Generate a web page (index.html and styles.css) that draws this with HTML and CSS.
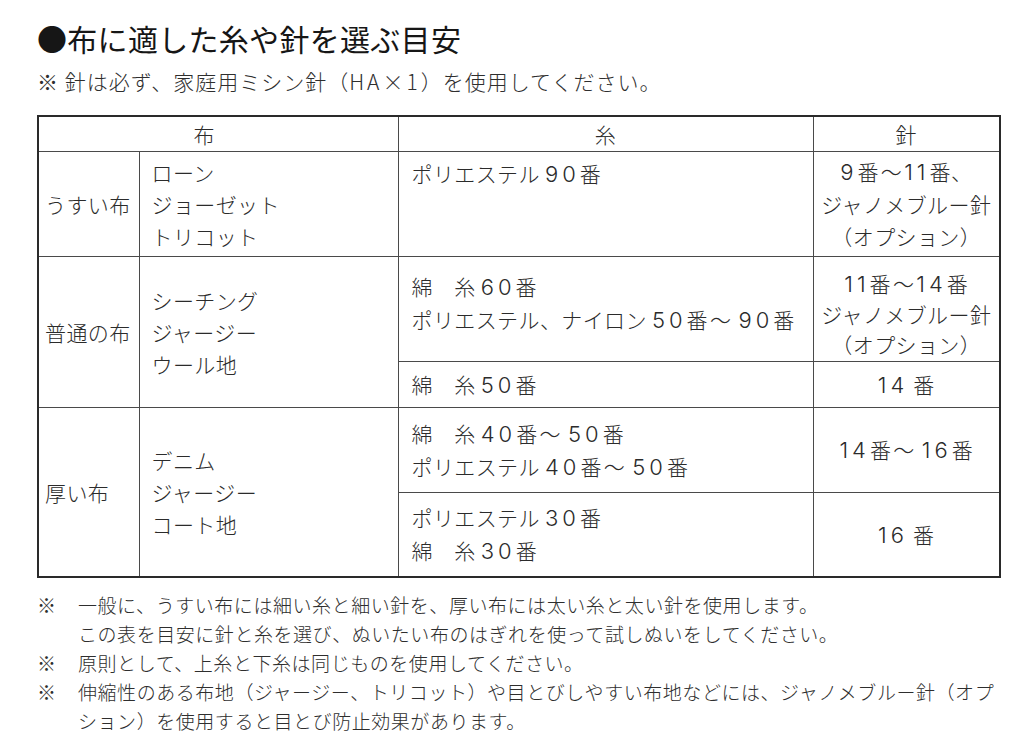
FILE: index.html
```html
<!DOCTYPE html>
<html lang="ja">
<head>
<meta charset="utf-8">
<title>布に適した糸や針を選ぶ目安</title>
<link rel="stylesheet" href="styles.css">
</head>
<body>
<main class="page">
  <h1 class="title">●布に適した糸や針を選ぶ目安</h1>
  <p class="lead">※ 針は必ず、家庭用ミシン針（<span class="latin">HA×1</span>）を使用してください。</p>

  <table class="chart">
    <colgroup>
      <col class="c-kind">
      <col class="c-fabric">
      <col class="c-thread">
      <col class="c-needle">
    </colgroup>
    <thead>
      <tr class="r-head">
        <th class="h-fabric" colspan="2">布</th>
        <th>糸</th>
        <th>針</th>
      </tr>
    </thead>
    <tbody>
      <tr class="r-thin">
        <td class="kind">うすい布</td>
        <td class="fabric">ローン<br>ジョーゼット<br>トリコット</td>
        <td class="thread top">ポリエステル <span class="num">90</span>番</td>
        <td class="needle"><span class="num">9</span>番<span class="wave">～</span><span class="num">11</span>番、<br>ジャノメブルー針<br>（オプション）</td>
      </tr>
      <tr class="r-mid-a">
        <td class="kind" rowspan="2">普通の布</td>
        <td class="fabric" rowspan="2">シーチング<br>ジャージー<br>ウール地</td>
        <td class="thread top-mid">綿　糸 <span class="num">60</span>番<br>ポリエステル、ナイロン <span class="num">50</span>番<span class="wave">～</span> <span class="num">90</span>番</td>
        <td class="needle top-tight">
          <span class="num">11</span>番<span class="wave">～</span><span class="num">14</span>番<br>ジャノメブルー針<br>（オプション）</td>
      </tr>
      <tr class="r-mid-b">
        <td class="thread">綿　糸 <span class="num">50</span>番</td>
        <td class="needle"><span class="num">14</span> 番</td>
      </tr>
      <tr class="r-thick-a">
        <td class="kind" rowspan="2">厚い布</td>
        <td class="fabric" rowspan="2">デニム<br>ジャージー<br>コート地</td>
        <td class="thread">綿　糸 <span class="num">40</span>番<span class="wave">～</span> <span class="num">50</span>番<br>ポリエステル <span class="num">40</span>番<span class="wave">～</span> <span class="num">50</span>番</td>
        <td class="needle"><span class="num">14</span>番<span class="wave">～</span> <span class="num">16</span>番</td>
      </tr>
      <tr class="r-thick-b">
        <td class="thread">ポリエステル <span class="num">30</span>番<br>綿　糸 <span class="num">30</span>番</td>
        <td class="needle"><span class="num">16</span> 番</td>
      </tr>
    </tbody>
  </table>

  <ul class="notes">
    <li><span class="mark">※</span><span class="text">一般に、うすい布には細い糸と細い針を、厚い布には太い糸と太い針を使用します。<br>この表を目安に針と糸を選び、ぬいたい布のはぎれを使って試しぬいをしてください。</span></li>
    <li><span class="mark">※</span><span class="text">原則として、上糸と下糸は同じものを使用してください。</span></li>
    <li><span class="mark">※</span><span class="text">伸縮性のある布地（ジャージー、トリコット）や目とびしやすい布地などには、ジャノメブルー針（オプ<br>ション）を使用すると目とび防止効果があります。</span></li>
  </ul>
</main>
</body>
</html>
```

FILE: styles.css
```css
html, body {
  margin: 0;
  padding: 0;
  background: #ffffff;
}

body {
  font-family: "Noto Sans CJK JP", "Noto Sans", sans-serif;
  color: #2b2b2b;
}

.page {
  padding: 18px 0 0 37px;
  width: 962px;
}

.title {
  margin: 0;
  font-size: 30px;
  line-height: 40px;
  font-weight: 400;
  color: #161616;
  letter-spacing: 0.3px;
}

.lead {
  margin: 9px 0 0 0;
  font-size: 21px;
  line-height: 28px;
  font-weight: 300;
  letter-spacing: 1px;
  color: #2e2e2e;
}

.latin {
  letter-spacing: 3px;
}

.chart {
  margin-top: 20px;
  width: 962px;
  border-collapse: collapse;
  table-layout: fixed;
  border: 2px solid #2a2a2a;
  font-size: 21px;
  line-height: 32px;
  font-weight: 300;
  letter-spacing: 0.4px;
}

.c-kind { width: 101px; }
.c-fabric { width: 259px; }
.c-thread { width: 415px; }
.c-needle { width: 187px; }

.chart th,
.chart td {
  border: 1px solid #4a4a4a;
  padding: 0;
  vertical-align: middle;
}

.chart th {
  font-weight: 300;
  text-align: center;
}

.chart th.h-fabric {
  padding-right: 28px;
}

.num {
  font-family: "Inter", "Noto Sans", sans-serif;
  font-size: 22px;
  font-weight: 300;
  letter-spacing: 4px;
}

.wave {
  display: inline-block;
  margin: 0 2px;
}

.r-head { height: 35px; }
.r-thin { height: 105px; }
.r-mid-a { height: 105px; }
.r-mid-b { height: 46px; }
.r-thick-a { height: 85px; }
.r-thick-b { height: 85px; }

.kind {
  padding-left: 6px !important;
  white-space: nowrap;
}

.fabric {
  padding-left: 12px !important;
}

.thread {
  padding-left: 13px !important;
  white-space: nowrap;
}

.needle {
  text-align: center;
  white-space: nowrap;
}

.top {
  vertical-align: top !important;
  padding-top: 5px !important;
}

.top-mid {
  vertical-align: top !important;
  padding-top: 13px !important;
}

.top-tight {
  vertical-align: top !important;
  padding-top: 11px !important;
  line-height: 30px;
}

.notes {
  list-style: none;
  margin: 12px 0 0 0;
  padding: 0;
  font-size: 19px;
  line-height: 29px;
  font-weight: 300;
  letter-spacing: 0.55px;
  color: #2e2e2e;
}

.notes li {
  display: flex;
}

.mark {
  flex: 0 0 41px;
}

.text {
  white-space: nowrap;
}
```
